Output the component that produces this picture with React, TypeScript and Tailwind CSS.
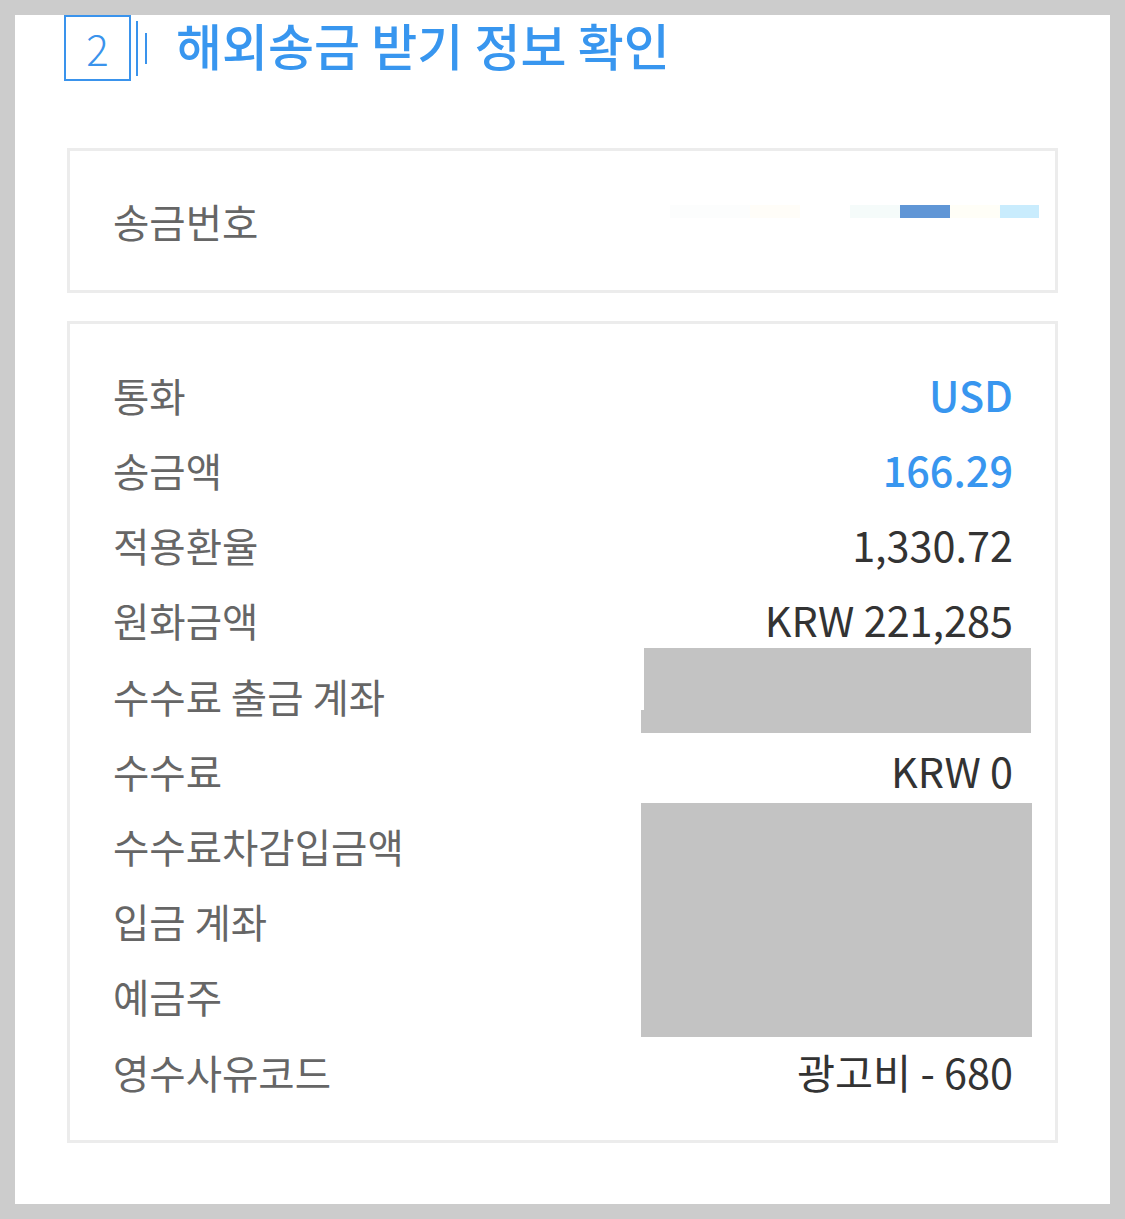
import React from "react"

const font = { fontFamily: '"Noto Sans CJK KR", "Noto Sans", sans-serif' }

type Row = { label: string; value?: string; blue?: boolean; hidden?: boolean }

const rows: Row[] = [
  { label: "통화", value: "USD", blue: true },
  { label: "송금액", value: "166.29", blue: true },
  { label: "적용환율", value: "1,330.72" },
  { label: "원화금액", value: "KRW 221,285" },
  { label: "수수료 출금 계좌", hidden: true },
  { label: "수수료", value: "KRW 0" },
  { label: "수수료차감입금액", hidden: true },
  { label: "입금 계좌", hidden: true },
  { label: "예금주", hidden: true },
  { label: "영수사유코드", value: "광고비 - 680" },
]

export default function App() {
  return (
    <div className="w-[1125px] h-[1219px] bg-[#cccccc] p-[15px]" style={font}>
      <div className="bg-white h-full">
        {/* Header */}
        <div className="flex items-center pl-[49px] h-[66px]">
          <div className="w-[67px] h-[66px] border-2 border-[#3a93ec] flex items-center justify-center text-[#3a93ec] text-[42px] font-light leading-none">
            2
          </div>
          <div className="ml-[5px] w-[2px] h-[55px] bg-[#3a93ec]" />
          <div className="ml-[7px] w-[2px] h-[31px] bg-[#3a93ec]" />
          <h1 className="ml-[29px] -mt-[8px] text-[50px] font-medium text-[#3896ef] leading-none">
            해외송금 받기 정보 확인
          </h1>
        </div>

        <div className="px-[52px] pt-[67px]">
          {/* 송금번호 */}
          <div className="border-[3px] border-[#ececec] h-[145px] flex items-center justify-between pl-[43px] pr-[16px]">
            <span className="text-[39.5px] text-[#666666] leading-none">송금번호</span>
            <div className="flex items-end h-[14px] mb-[20px]">
              <div className="w-[80px] h-[13px] bg-[#fcfdfd]" />
              <div className="w-[50px] h-[13px] bg-[#fffdf8]" />
              <div className="w-[50px] h-[13px] bg-white" />
              <div className="w-[50px] h-[13px] bg-[#f5fbfa]" />
              <div className="w-[50px] h-[13px] bg-[#6096d6]" />
              <div className="w-[50px] h-[13px] bg-[#fffef7]" />
              <div className="w-[39px] h-[13px] bg-[#c9ecfd]" />
            </div>
          </div>

          {/* Details */}
          <div className="mt-[28px] border-[3px] border-[#ececec] pt-[33px] pb-[31px] pl-[43px] pr-[42px] relative">
            {rows.map((r) => (
              <div key={r.label} className="h-[75.2px] flex items-center justify-between">
                <span className="text-[39.5px] text-[#666666] leading-none">{r.label}</span>
                {r.value && (
                  <span
                    className={
                      r.blue
                        ? "text-[41.4px] font-medium text-[#3896ef] leading-none"
                        : "text-[41.4px] text-[#333333] leading-none"
                    }
                  >
                    {r.value}
                  </span>
                )}
              </div>
            ))}
            {/* redacted areas */}
            <div className="absolute left-[574px] top-[324px] w-[387px] h-[85px] bg-[#c3c3c3]" />
            <div className="absolute left-[571px] top-[386px] w-[4px] h-[23px] bg-[#c3c3c3]" />
            <div className="absolute left-[571px] top-[479px] w-[391px] h-[234px] bg-[#c3c3c3]" />
          </div>
        </div>
      </div>
    </div>
  )
}
